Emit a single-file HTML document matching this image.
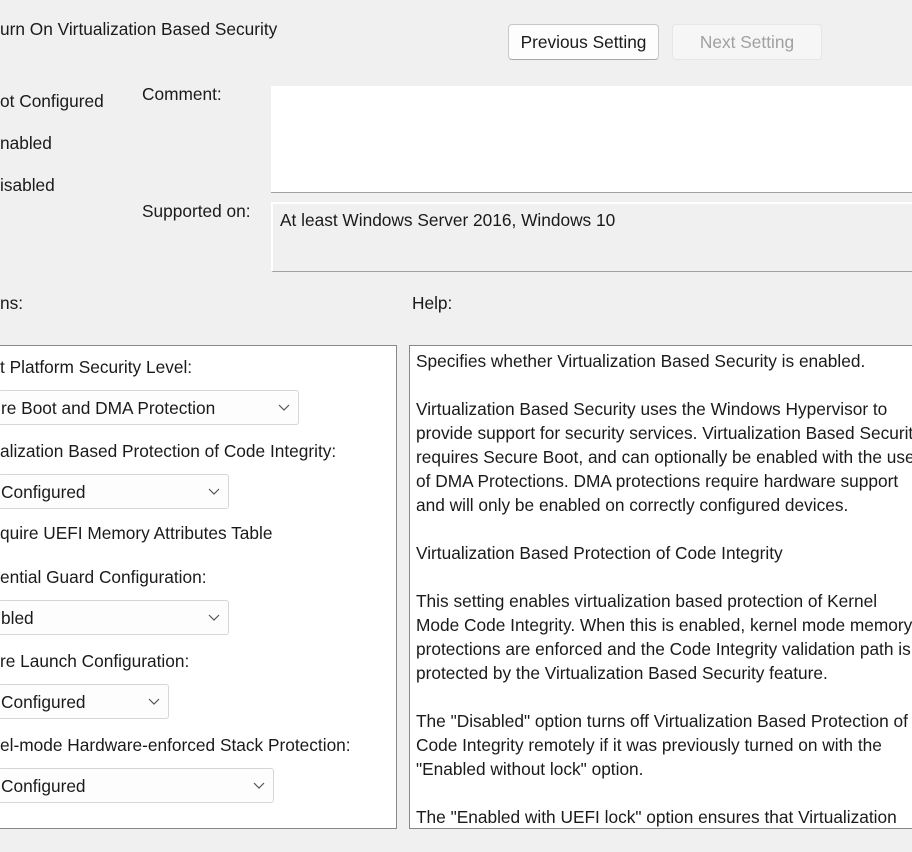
<!DOCTYPE html>
<html><head><meta charset="utf-8"><style>
*{margin:0;padding:0;box-sizing:border-box}
body{width:912px;height:852px;background:#f0f0f0;overflow:hidden;position:relative;font-family:"Liberation Sans",sans-serif;font-size:17.3px;color:#1a1a1a}
.t{position:absolute;white-space:nowrap;line-height:20px}
.btn{position:absolute;border-radius:4px;text-align:center;line-height:34px;height:36px}
.dd{position:absolute;left:-2px;height:35px;background:#fdfdfd;border:1px solid #d6d6d6;border-radius:3px;padding-left:2px;line-height:34px;white-space:nowrap}
.dd svg{position:absolute;right:8px;top:13px}
.help{position:absolute;left:409px;top:345px;width:520px;height:484px;background:#fff;border:1px solid #888;overflow:hidden}
.help div{position:absolute;left:6px;white-space:nowrap;line-height:24px}
</style></head><body>
<div class="t" style="left:0;top:19px">urn On Virtualization Based Security</div>
<div class="btn" style="left:508px;top:24px;width:151px;background:#fdfdfd;border:1px solid #c8c8c8;border-bottom-color:#a8a8a8">Previous Setting</div>
<div class="btn" style="left:672px;top:24px;width:150px;background:#f6f6f6;border:1px solid #e6e6e6;color:#a0a0a0">Next Setting</div>
<div class="t" style="left:0;top:91px">ot Configured</div>
<div class="t" style="left:0;top:133px">nabled</div>
<div class="t" style="left:0;top:175px">isabled</div>
<div class="t" style="left:142px;top:84px">Comment:</div>
<div style="position:absolute;left:271px;top:86px;width:641px;height:107px;background:#fff;border-bottom:1px solid #a0a0a0"></div>
<div class="t" style="left:142px;top:201px">Supported on:</div>
<div style="position:absolute;left:271px;top:202px;width:641px;height:70px;background:#f0f0f0;border:2px solid #fff;border-right:none;border-bottom:1px solid #a0a0a0"></div>
<div class="t" style="left:280px;top:210px">At least Windows Server 2016, Windows 10</div>
<div class="t" style="left:0;top:293px">ns:</div>
<div class="t" style="left:412px;top:293px">Help:</div>
<div style="position:absolute;left:-2px;top:345px;width:399px;height:484px;background:#fff;border:1px solid #888"></div>
<div class="t" style="left:0;top:357px">t Platform Security Level:</div>
<div class="dd" style="top:390px;width:301px">re Boot and DMA Protection<svg width="12" height="8"><path d="M1 1l5 5 5-5" fill="none" stroke="#555" stroke-width="1.2"/></svg></div>
<div class="t" style="left:0;top:441px">alization Based Protection of Code Integrity:</div>
<div class="dd" style="top:474px;width:231px">Configured<svg width="12" height="8"><path d="M1 1l5 5 5-5" fill="none" stroke="#555" stroke-width="1.2"/></svg></div>
<div class="t" style="left:0;top:523px">quire UEFI Memory Attributes Table</div>
<div class="t" style="left:0;top:567px">ential Guard Configuration:</div>
<div class="dd" style="top:600px;width:231px">bled<svg width="12" height="8"><path d="M1 1l5 5 5-5" fill="none" stroke="#555" stroke-width="1.2"/></svg></div>
<div class="t" style="left:0;top:651px">re Launch Configuration:</div>
<div class="dd" style="top:684px;width:171px">Configured<svg width="12" height="8"><path d="M1 1l5 5 5-5" fill="none" stroke="#555" stroke-width="1.2"/></svg></div>
<div class="t" style="left:0;top:735px">el-mode Hardware-enforced Stack Protection:</div>
<div class="dd" style="top:768px;width:276px">Configured<svg width="12" height="8"><path d="M1 1l5 5 5-5" fill="none" stroke="#555" stroke-width="1.2"/></svg></div>
<div class="help">
<div style="top:3px">Specifies whether Virtualization Based Security is enabled.</div>
<div style="top:51px">Virtualization Based Security uses the Windows Hypervisor to</div>
<div style="top:75px">provide support for security services. Virtualization Based Security</div>
<div style="top:99px">requires Secure Boot, and can optionally be enabled with the use</div>
<div style="top:123px">of DMA Protections. DMA protections require hardware support</div>
<div style="top:147px">and will only be enabled on correctly configured devices.</div>
<div style="top:195px">Virtualization Based Protection of Code Integrity</div>
<div style="top:243px">This setting enables virtualization based protection of Kernel</div>
<div style="top:267px">Mode Code Integrity. When this is enabled, kernel mode memory</div>
<div style="top:291px">protections are enforced and the Code Integrity validation path is</div>
<div style="top:315px">protected by the Virtualization Based Security feature.</div>
<div style="top:363px">The "Disabled" option turns off Virtualization Based Protection of</div>
<div style="top:387px">Code Integrity remotely if it was previously turned on with the</div>
<div style="top:411px">"Enabled without lock" option.</div>
<div style="top:459px">The "Enabled with UEFI lock" option ensures that Virtualization</div>
</div>
</body></html>
